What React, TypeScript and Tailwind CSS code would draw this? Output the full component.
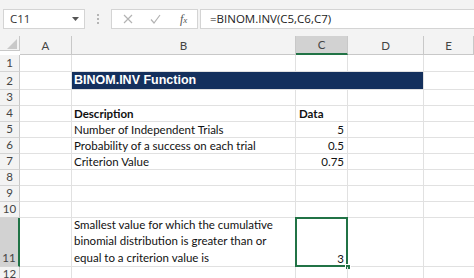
import React from "react";

const cellFont = { fontFamily: "Lato, 'Open Sans', sans-serif" };

type Row = {
  n: number;
  h: string;
  b?: React.ReactNode;
  c?: React.ReactNode;
  cAlign?: "left" | "right";
  bold?: boolean;
};

const rows: Row[] = [
  { n: 1, h: "h-[17px]" },
  { n: 2, h: "h-[18px]" },
  { n: 3, h: "h-[16px]" },
  { n: 4, h: "h-[16px]", b: "Description", c: "Data", cAlign: "left", bold: true },
  { n: 5, h: "h-[16px]", b: "Number of Independent Trials", c: "5", cAlign: "right" },
  { n: 6, h: "h-[16px]", b: "Probability of a success on each trial", c: "0.5", cAlign: "right" },
  { n: 7, h: "h-[16px]", b: "Criterion Value", c: "0.75", cAlign: "right" },
  { n: 8, h: "h-[16px]" },
  { n: 9, h: "h-[16px]" },
  { n: 10, h: "h-[16px]" },
  { n: 11, h: "h-[49px]" },
  { n: 12, h: "h-[16px]" },
];

function FormulaBar() {
  return (
    <div className="h-[36px] bg-[#f3f3f3] flex items-start pt-[9px] pl-[3px]" style={{ fontFamily: "'Open Sans', sans-serif" }}>
      {/* NAME BOX */}
      <div className="w-[82px] h-[20px] bg-white border border-[#d4d4d4] flex items-center justify-between pl-[6px] pr-[5px] text-[11.5px] text-[#333]">
        <span>C11</span>
        <svg width="7" height="4" viewBox="0 0 7 4"><path d="M0 0h7L3.5 4z" fill="#555" /></svg>
      </div>

      {/* DOTS */}
      <div className="w-[26px] h-[20px] flex flex-col items-center justify-center gap-[2px]">
        <span className="w-[2px] h-[2px] bg-[#b5b5b5]" />
        <span className="w-[2px] h-[2px] bg-[#b5b5b5]" />
        <span className="w-[2px] h-[2px] bg-[#b5b5b5]" />
      </div>

      {/* X / CHECK / FX */}
      <div className="w-[87px] h-[20px] bg-white border border-[#d4d4d4] flex items-center">
        <svg className="ml-[11px]" width="10" height="10" viewBox="0 0 10 10">
          <path d="M1 1l8 8M9 1l-8 8" stroke="#b3b3b3" strokeWidth="1.2" />
        </svg>
        <svg className="ml-[17px]" width="11" height="10" viewBox="0 0 11 10">
          <path d="M1 5.5l3 3.5L10 1" stroke="#b3b3b3" strokeWidth="1.2" fill="none" />
        </svg>
        <span className="ml-[19px] text-[12px] italic text-[#555]" style={{ fontFamily: "'Liberation Serif', serif" }}>
          f<span className="text-[9px]">x</span>
        </span>
      </div>

      {/* FORMULA INPUT */}
      <div className="ml-[2px] flex-1 h-[20px] bg-white border-y border-l border-[#d4d4d4] flex items-center pl-[9px] text-[11.5px] text-[#222]">
        =BINOM.INV(C5,C6,C7)
      </div>
    </div>
  );
}

function ColHeader({ label, active }: { label: string; active?: boolean }) {
  return (
    <div
      className={
        "flex items-center justify-center text-[11.5px] text-[#444] border-r border-[#c8c8c8] " +
        (active ? "bg-[#d2d2d2] border-b-2 border-b-[#217346]" : "bg-[#f3f3f3] border-b border-b-[#c8c8c8]")
      }
    >
      {label}
    </div>
  );
}

export default function App() {
  return (
    <div className="w-[474px] h-[278px] overflow-hidden bg-white" style={cellFont}>
      <FormulaBar />

      <div className="grid grid-cols-[20px_52px_224px_52px_76px_50px]">
        {/* HEADER ROW */}
        <div className="h-[15px] bg-[#f3f3f3] border-r border-b border-[#c8c8c8] flex items-end justify-end pr-[2px] pb-[1px]">
          <svg width="10" height="10" viewBox="0 0 10 10"><path d="M10 0v10H0z" fill="#c9c9c9" /></svg>
        </div>
        <ColHeader label="A" />
        <ColHeader label="B" />
        <ColHeader label="C" active />
        <ColHeader label="D" />
        <ColHeader label="E" />

        {rows.map((r) => {
          const sel = r.n === 11;
          return (
            <React.Fragment key={r.n}>
              {/* ROW NUMBER */}
              <div
                className={
                  r.h +
                  " flex items-end justify-center pb-[1px] text-[11.5px] leading-[14px] text-[#444] border-b border-[#d4d4d4] " +
                  (sel ? "bg-[#d2d2d2] border-r-2 border-r-[#217346]" : "bg-[#f3f3f3] border-r border-r-[#c8c8c8]")
                }
              >
                {r.n}
              </div>

              {/* A */}
              <div className={r.h + " border-r border-b border-[#e1e1e1]"} />

              {/* B..D */}
              {r.n === 2 ? (
                <div
                  className={r.h + " col-span-3 bg-[#14305d] border-r border-b border-[#e1e1e1] flex items-center pl-[2px] text-white font-bold text-[12.5px]"}
                  style={{ fontFamily: "'Liberation Sans', Arial, sans-serif" }}
                >
                  BINOM.INV Function
                </div>
              ) : (
                <>
                  <div
                    className={
                      r.h +
                      " border-r border-b border-[#e1e1e1] flex items-end pl-[2px] text-[11.5px] text-[#111] " +
                      (r.bold ? "font-bold" : "")
                    }
                  >
                    {sel ? (
                      <div className="leading-[16.5px] whitespace-nowrap">
                        Smallest value for which the cumulative
                        <br />
                        binomial distribution is greater than or
                        <br />
                        equal to a criterion value is
                      </div>
                    ) : (
                      <span className="leading-[15px]">{r.b}</span>
                    )}
                  </div>
                  <div
                    className={
                      r.h +
                      " relative border-r border-b border-[#e1e1e1] flex items-end px-[3px] text-[11.5px] text-[#111] " +
                      (r.cAlign === "right" || sel ? "justify-end " : "justify-start ") +
                      (r.bold ? "font-bold" : "")
                    }
                  >
                    <span className="leading-[15px]">{sel ? "3" : r.c}</span>
                    {sel && (
                      <>
                        <div className="absolute -left-[1px] -top-[1px] -right-[1px] -bottom-[1px] border-2 border-[#217346]" />
                        <div className="absolute -right-[4px] -bottom-[4px] w-[6px] h-[6px] bg-[#217346] border border-white" />
                      </>
                    )}
                  </div>
                  <div className={r.h + " border-r border-b border-[#e1e1e1]"} />
                </>
              )}

              {/* E */}
              <div className={r.h + " border-b border-[#e1e1e1]"} />
            </React.Fragment>
          );
        })}
      </div>
    </div>
  );
}
